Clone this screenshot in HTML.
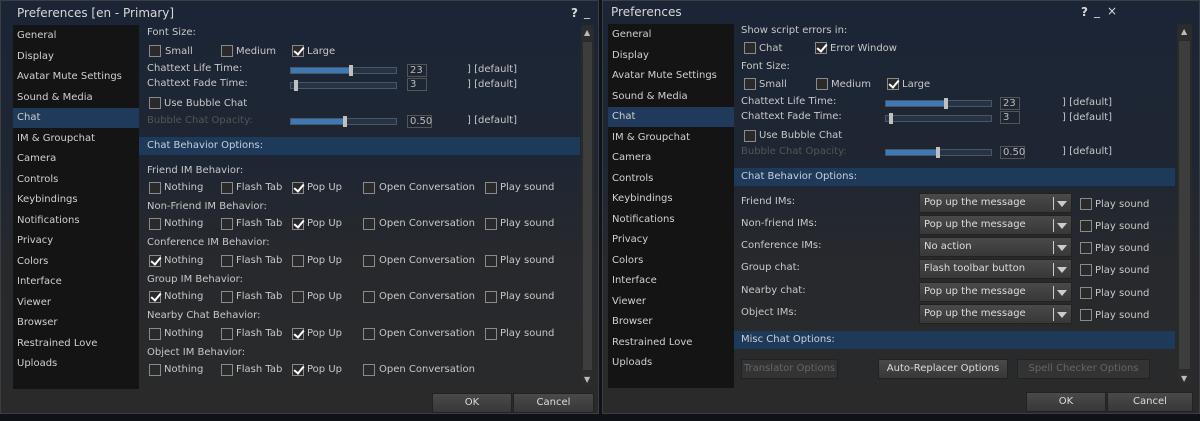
<!DOCTYPE html><html><head><meta charset="utf-8"><style>
*{margin:0;padding:0;box-sizing:border-box}
body{width:1200px;height:421px;background:#0f1216;position:relative;overflow:hidden;font-family:"DejaVu Sans","Liberation Sans",sans-serif;font-size:10px;color:#c8c8c8}
.win{position:absolute;top:0;height:414px;background:linear-gradient(#1c2535 0px,#1e2634 150px,#27292c 260px,#2a2a2b 414px);border:1px solid #3a3d42}
.t{position:absolute;white-space:nowrap;line-height:12px}
.ttl{font-size:12px;color:#d8d8d8}
.side{position:absolute;background:#141414}
.si{position:absolute;left:4px;font-size:10px;color:#d0d0d0;line-height:12px}
.sel{position:absolute;background:#1f3a5a}
.cb{position:absolute;width:12px;height:12px;border:1px solid #8a8a8a;background:#2a2a2a}
.cb.on::after{content:"";position:absolute;left:3px;top:-1px;width:4px;height:8px;border:solid #fff;border-width:0 2px 2px 0;transform:rotate(40deg)}
.hd{position:absolute;background:#1e3a5b;color:#c8d0d8}
.sl{position:absolute;height:7px;background:#253344;border:1px solid #4a5566}
.sl i{position:absolute;left:0;top:0;bottom:0;background:#3d79b4}
.sl b{position:absolute;top:-3px;width:4px;height:11px;background:#c0c0c0}
.vb{position:absolute;width:20px;height:13px;border:1px solid #555;color:#bbb;padding-left:2px;line-height:11px;font-size:10px}
.sb{position:absolute;background:#3a3a3a;border:1px solid #2a2a2a}
.btn{position:absolute;background:linear-gradient(#4a4a4a,#383838);border:1px solid #222;color:#ddd;text-align:center;line-height:18px}
.dd{position:absolute;width:153px;height:20px;background:linear-gradient(#4a4a4a,#383838);border:1px solid #222;color:#ddd;padding-left:4px;line-height:18px}
.dd::after{content:"";position:absolute;right:4px;top:7px;border:5px solid transparent;border-top:6px solid #ccc}
.dd::before{content:"";position:absolute;right:17px;top:3px;width:1px;height:13px;background:#ccc}
.dim{color:#555}
</style></head><body>

<!-- LEFT WINDOW -->
<div class="win" style="left:0;width:599px">
<div class="t ttl" style="left:16px;top:6px">Preferences [en - Primary]</div>
<div class="t ttl" style="left:570px;top:6px;font-weight:bold">? </div>
<div class="t ttl" style="left:583px;top:5px">_</div>
<div class="side" style="left:12px;top:24px;width:126px;height:364px"></div>
<div class="sel" style="left:12px;top:107px;width:126px;height:20px"></div>
<div class="si" style="left:16px;top:29px">General</div>
<div class="si" style="left:16px;top:50px">Display</div>
<div class="si" style="left:16px;top:70px">Avatar Mute Settings</div>
<div class="si" style="left:16px;top:91px">Sound &amp; Media</div>
<div class="si" style="left:16px;top:111px">Chat</div>
<div class="si" style="left:16px;top:132px">IM &amp; Groupchat</div>
<div class="si" style="left:16px;top:152px">Camera</div>
<div class="si" style="left:16px;top:173px">Controls</div>
<div class="si" style="left:16px;top:193px">Keybindings</div>
<div class="si" style="left:16px;top:214px">Notifications</div>
<div class="si" style="left:16px;top:234px">Privacy</div>
<div class="si" style="left:16px;top:255px">Colors</div>
<div class="si" style="left:16px;top:275px">Interface</div>
<div class="si" style="left:16px;top:296px">Viewer</div>
<div class="si" style="left:16px;top:316px">Browser</div>
<div class="si" style="left:16px;top:337px">Restrained Love</div>
<div class="si" style="left:16px;top:357px">Uploads</div>

<div class="t" style="left:146px;top:26px">Font Size:</div>
<div class="cb" style="left:148px;top:44px"></div><div class="t" style="left:164px;top:45px">Small</div>
<div class="cb" style="left:220px;top:44px"></div><div class="t" style="left:235px;top:45px">Medium</div>
<div class="cb on" style="left:291px;top:44px"></div><div class="t" style="left:306px;top:45px">Large</div>
<div class="t" style="left:146px;top:62px">Chattext Life Time:</div>
<div class="sl" style="left:289px;top:66px;width:107px"><i style="width:60px"></i><b style="left:58px"></b></div>
<div class="vb" style="left:406px;top:63px">23</div>
<div class="t" style="left:466px;top:63px">] [default]</div>
<div class="t" style="left:146px;top:77px">Chattext Fade Time:</div>
<div class="sl" style="left:289px;top:81px;width:107px"><b style="left:3px"></b></div>
<div class="vb" style="left:406px;top:77px">3</div>
<div class="t" style="left:466px;top:78px">] [default]</div>
<div class="cb" style="left:148px;top:96px"></div><div class="t" style="left:163px;top:97px">Use Bubble Chat</div>
<div class="t dim" style="left:146px;top:114px">Bubble Chat Opacity:</div>
<div class="sl" style="left:289px;top:117px;width:107px"><i style="width:54px"></i><b style="left:52px"></b></div>
<div class="vb" style="left:406px;top:114px;width:25px">0.50</div>
<div class="t" style="left:466px;top:114px">] [default]</div>
<div class="hd" style="left:138px;top:136px;width:441px;height:18px"></div>
<div class="t" style="left:146px;top:139px;color:#c8d0d8">Chat Behavior Options:</div>

<div class="t" style="left:146px;top:164px">Friend IM Behavior:</div>
<div class="cb" style="left:148px;top:181px"></div><div class="t" style="left:163px;top:181px">Nothing</div>
<div class="cb" style="left:220px;top:181px"></div><div class="t" style="left:235px;top:181px">Flash Tab</div>
<div class="cb on" style="left:291px;top:181px"></div><div class="t" style="left:306px;top:181px">Pop Up</div>
<div class="cb" style="left:362px;top:181px"></div><div class="t" style="left:378px;top:181px">Open Conversation</div>
<div class="cb" style="left:484px;top:181px"></div><div class="t" style="left:499px;top:181px">Play sound</div>

<div class="t" style="left:146px;top:200px">Non-Friend IM Behavior:</div>
<div class="cb" style="left:148px;top:217px"></div><div class="t" style="left:163px;top:217px">Nothing</div>
<div class="cb" style="left:220px;top:217px"></div><div class="t" style="left:235px;top:217px">Flash Tab</div>
<div class="cb on" style="left:291px;top:217px"></div><div class="t" style="left:306px;top:217px">Pop Up</div>
<div class="cb" style="left:362px;top:217px"></div><div class="t" style="left:378px;top:217px">Open Conversation</div>
<div class="cb" style="left:484px;top:217px"></div><div class="t" style="left:499px;top:217px">Play sound</div>

<div class="t" style="left:146px;top:236px">Conference IM Behavior:</div>
<div class="cb on" style="left:148px;top:254px"></div><div class="t" style="left:163px;top:254px">Nothing</div>
<div class="cb" style="left:220px;top:254px"></div><div class="t" style="left:235px;top:254px">Flash Tab</div>
<div class="cb" style="left:291px;top:254px"></div><div class="t" style="left:306px;top:254px">Pop Up</div>
<div class="cb" style="left:362px;top:254px"></div><div class="t" style="left:378px;top:254px">Open Conversation</div>
<div class="cb" style="left:484px;top:254px"></div><div class="t" style="left:499px;top:254px">Play sound</div>

<div class="t" style="left:146px;top:273px">Group IM Behavior:</div>
<div class="cb on" style="left:148px;top:290px"></div><div class="t" style="left:163px;top:290px">Nothing</div>
<div class="cb" style="left:220px;top:290px"></div><div class="t" style="left:235px;top:290px">Flash Tab</div>
<div class="cb" style="left:291px;top:290px"></div><div class="t" style="left:306px;top:290px">Pop Up</div>
<div class="cb" style="left:362px;top:290px"></div><div class="t" style="left:378px;top:290px">Open Conversation</div>
<div class="cb" style="left:484px;top:290px"></div><div class="t" style="left:499px;top:290px">Play sound</div>

<div class="t" style="left:146px;top:309px">Nearby Chat Behavior:</div>
<div class="cb" style="left:148px;top:327px"></div><div class="t" style="left:163px;top:327px">Nothing</div>
<div class="cb" style="left:220px;top:327px"></div><div class="t" style="left:235px;top:327px">Flash Tab</div>
<div class="cb on" style="left:291px;top:327px"></div><div class="t" style="left:306px;top:327px">Pop Up</div>
<div class="cb" style="left:362px;top:327px"></div><div class="t" style="left:378px;top:327px">Open Conversation</div>
<div class="cb" style="left:484px;top:327px"></div><div class="t" style="left:499px;top:327px">Play sound</div>

<div class="t" style="left:146px;top:346px">Object IM Behavior:</div>
<div class="cb" style="left:148px;top:363px"></div><div class="t" style="left:163px;top:363px">Nothing</div>
<div class="cb" style="left:220px;top:363px"></div><div class="t" style="left:235px;top:363px">Flash Tab</div>
<div class="cb on" style="left:291px;top:363px"></div><div class="t" style="left:306px;top:363px">Pop Up</div>
<div class="cb" style="left:362px;top:363px"></div><div class="t" style="left:378px;top:363px">Open Conversation</div>

<div class="sb" style="left:580px;top:24px;width:13px;height:362px;background:#2c2c2c"></div>
<div class="sb" style="left:581px;top:40px;width:11px;height:330px;background:#3d3d3d"></div>
<div class="t" style="left:583px;top:26px;font-size:8px;color:#bbb">▲</div>
<div class="t" style="left:583px;top:373px;font-size:8px;color:#bbb">▼</div>
<div class="btn" style="left:431px;top:392px;width:80px;height:20px">OK</div>
<div class="btn" style="left:512px;top:392px;width:81px;height:20px">Cancel</div>
</div>

<!-- RIGHT WINDOW -->
<div class="win" style="left:602px;width:598px"></div>
<div class="t ttl" style="left:611px;top:6px">Preferences</div>
<div class="t ttl" style="left:1081px;top:6px;font-weight:bold">?</div>
<div class="t ttl" style="left:1094px;top:5px">_</div>
<div class="t ttl" style="left:1107px;top:5px">×</div>
<div class="side" style="left:608px;top:24px;width:126px;height:364px"></div>
<div class="sel" style="left:608px;top:107px;width:126px;height:20px"></div>
<div class="si" style="left:612px;top:29px">General</div>
<div class="si" style="left:612px;top:50px">Display</div>
<div class="si" style="left:612px;top:70px">Avatar Mute Settings</div>
<div class="si" style="left:612px;top:91px">Sound &amp; Media</div>
<div class="si" style="left:612px;top:111px">Chat</div>
<div class="si" style="left:612px;top:132px">IM &amp; Groupchat</div>
<div class="si" style="left:612px;top:152px">Camera</div>
<div class="si" style="left:612px;top:173px">Controls</div>
<div class="si" style="left:612px;top:193px">Keybindings</div>
<div class="si" style="left:612px;top:214px">Notifications</div>
<div class="si" style="left:612px;top:234px">Privacy</div>
<div class="si" style="left:612px;top:255px">Colors</div>
<div class="si" style="left:612px;top:275px">Interface</div>
<div class="si" style="left:612px;top:296px">Viewer</div>
<div class="si" style="left:612px;top:316px">Browser</div>
<div class="si" style="left:612px;top:337px">Restrained Love</div>
<div class="si" style="left:612px;top:357px">Uploads</div>

<div class="t" style="left:741px;top:25px">Show script errors in:</div>
<div class="cb" style="left:744px;top:42px"></div><div class="t" style="left:759px;top:43px">Chat</div>
<div class="cb on" style="left:815px;top:42px"></div><div class="t" style="left:830px;top:43px">Error Window</div>
<div class="t" style="left:741px;top:61px">Font Size:</div>
<div class="cb" style="left:744px;top:78px"></div><div class="t" style="left:759px;top:79px">Small</div>
<div class="cb" style="left:816px;top:78px"></div><div class="t" style="left:831px;top:79px">Medium</div>
<div class="cb on" style="left:887px;top:78px"></div><div class="t" style="left:902px;top:79px">Large</div>
<div class="t" style="left:741px;top:96px">Chattext Life Time:</div>
<div class="sl" style="left:885px;top:100px;width:107px"><i style="width:60px"></i><b style="left:58px"></b></div>
<div class="vb" style="left:1000px;top:97px">23</div>
<div class="t" style="left:1062px;top:97px">] [default]</div>
<div class="t" style="left:741px;top:111px">Chattext Fade Time:</div>
<div class="sl" style="left:885px;top:115px;width:107px"><b style="left:3px"></b></div>
<div class="vb" style="left:1000px;top:111px">3</div>
<div class="t" style="left:1062px;top:112px">] [default]</div>
<div class="cb" style="left:744px;top:130px"></div><div class="t" style="left:759px;top:130px">Use Bubble Chat</div>
<div class="t dim" style="left:741px;top:146px">Bubble Chat Opacity:</div>
<div class="sl" style="left:885px;top:149px;width:107px"><i style="width:52px"></i><b style="left:50px"></b></div>
<div class="vb" style="left:1000px;top:146px;width:25px">0.50</div>
<div class="t" style="left:1062px;top:146px">] [default]</div>
<div class="hd" style="left:734px;top:168px;width:441px;height:18px"></div>
<div class="t" style="left:741px;top:171px;color:#c8d0d8">Chat Behavior Options:</div>

<div class="t" style="left:741px;top:196px">Friend IMs:</div><div class="dd" style="left:919px;top:193px">Pop up the message</div><div class="cb" style="left:1080px;top:198px"></div><div class="t" style="left:1095px;top:199px">Play sound</div>
<div class="t" style="left:741px;top:218px">Non-friend IMs:</div><div class="dd" style="left:919px;top:215px">Pop up the message</div><div class="cb" style="left:1080px;top:220px"></div><div class="t" style="left:1095px;top:221px">Play sound</div>
<div class="t" style="left:741px;top:240px">Conference IMs:</div><div class="dd" style="left:919px;top:237px">No action</div><div class="cb" style="left:1080px;top:242px"></div><div class="t" style="left:1095px;top:243px">Play sound</div>
<div class="t" style="left:741px;top:262px">Group chat:</div><div class="dd" style="left:919px;top:259px">Flash toolbar button</div><div class="cb" style="left:1080px;top:264px"></div><div class="t" style="left:1095px;top:265px">Play sound</div>
<div class="t" style="left:741px;top:285px">Nearby chat:</div><div class="dd" style="left:919px;top:282px">Pop up the message</div><div class="cb" style="left:1080px;top:287px"></div><div class="t" style="left:1095px;top:288px">Play sound</div>
<div class="t" style="left:741px;top:307px">Object IMs:</div><div class="dd" style="left:919px;top:304px">Pop up the message</div><div class="cb" style="left:1080px;top:309px"></div><div class="t" style="left:1095px;top:310px">Play sound</div>

<div class="hd" style="left:734px;top:331px;width:441px;height:18px"></div>
<div class="t" style="left:741px;top:334px;color:#c8d0d8">Misc Chat Options:</div>
<div class="btn" style="left:741px;top:359px;width:97px;height:20px;color:#666;background:#333">Translator Options</div>
<div class="btn" style="left:878px;top:359px;width:130px;height:20px">Auto-Replacer Options</div>
<div class="btn" style="left:1017px;top:359px;width:133px;height:20px;color:#666;background:#333">Spell Checker Options</div>

<div class="sb" style="left:1177px;top:24px;width:15px;height:362px;background:#2c2c2c"></div>
<div class="sb" style="left:1178px;top:40px;width:13px;height:330px;background:#3d3d3d"></div>
<div class="t" style="left:1181px;top:26px;font-size:8px;color:#bbb">▲</div>
<div class="t" style="left:1181px;top:373px;font-size:8px;color:#bbb">▼</div>
<div class="btn" style="left:1026px;top:392px;width:80px;height:20px">OK</div>
<div class="btn" style="left:1107px;top:392px;width:86px;height:20px">Cancel</div>
</body></html>
